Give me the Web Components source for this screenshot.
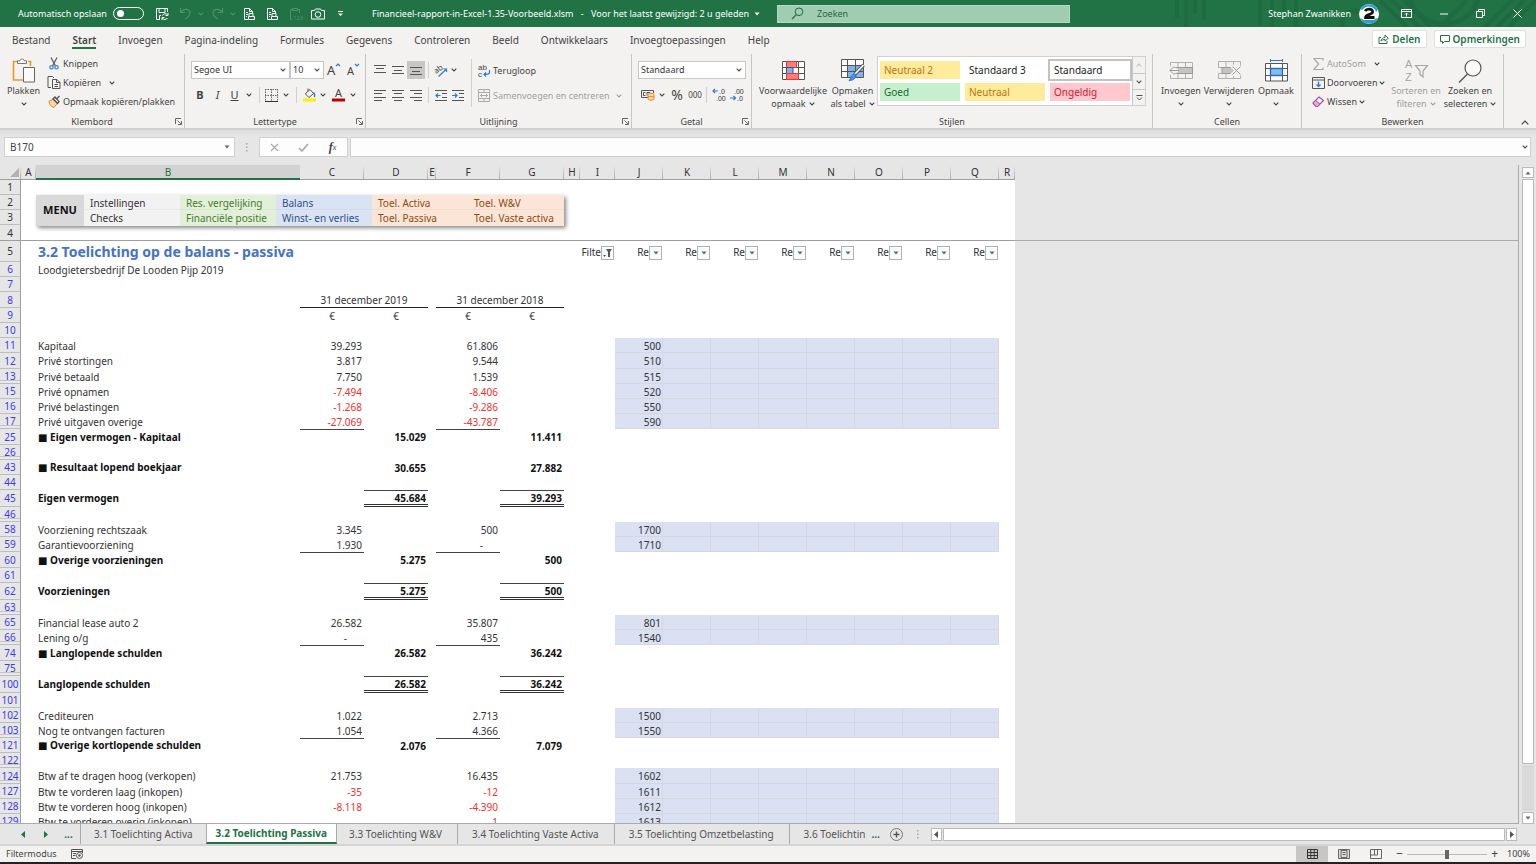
<!DOCTYPE html>
<html lang="nl">
<head>
<meta charset="utf-8">
<title>Financieel-rapport-in-Excel-1.35-Voorbeeld.xlsm</title>
<style>
html,body{margin:0;height:100%}
body{font:10px/14px "Noto Sans","Open Sans",sans-serif;color:#444;background:#e6e6e6;overflow:hidden}
</style>
</head>
<body>
<xl-app></xl-app>
<script>
const BASE=`*{box-sizing:border-box}button,input,select{font:inherit;color:inherit;margin:0;padding:0;border:0;background:none;border-radius:0;outline:0}button{cursor:default}a{color:inherit;text-decoration:none}`;
function define(tag,html){
  customElements.define(tag,class extends HTMLElement{
    connectedCallback(){
      if(this.shadowRoot)return;
      const root=this.attachShadow({mode:'open'});
      root.innerHTML=typeof html==='function'?html(this):html;
      const s=document.createElement('style');s.textContent=BASE;root.prepend(s);
    }
  });
}

/* ---------- icons: [width, height, markup] ---------- */
const lines=(a)=>a.map(([x,y,w])=>`<path d="M${x} ${y}.5h${w}" stroke="#555"/>`).join('');
const ICONS={
chev:[6,4,'<path d="M.7.7L3 3 5.3.7" stroke="currentColor" stroke-width="1.1"/>'],
save:[14,14,'<path d="M12.500 5V3.500V1.500H1.500V12.500H5M4 1.500V5.500H10V1.500M4.500 12.500V8.500H6" stroke="#fff"/><path d="M12.600 8A3 3 0 0 0 7.500 8.500M13 6v2.500h-2.500M7.300 11A3 3 0 0 0 12.500 11M7 13v-2.500H9.500" stroke="#fff"/>'],
undo:[13,13,'<path d="M1.500 1V5.500H6M1.800 5.300C4 2 8 1.500 10 3.500S11 9 6.500 12" stroke="#4f9068" stroke-width="1.200"/>'],
redo:[13,13,'<path d="M11.500 1V5.500H7M11.200 5.300C9 2 5 1.500 3 3.500S2 9 6.500 12" stroke="#4f9068" stroke-width="1.200"/>'],
sheetprint:[12,14,'<path d="M5 12.500H1.500V1.500H6.500L9.500 4.500V6M6.500 1.500V4.500H9.500M3 5.500H5M3 7.500H5M3 9.500H4" stroke="#fff"/><path d="M6 9V6.500H10V9M5.500 9.500h6v3h-6zM7 12.500h3" stroke="#fff"/>'],
paste123:[13,14,'<path d="M3 2.500H1.500V12.500H3M9 2.500H10.500V6M3.500 1.500H8.500V3.500H3.500z" stroke="#4f9068"/><text x="4" y="13" font-size="6" fill="#4f9068">123</text>'],
camera:[14,12,'<path d="M.500 2.500H3.500L4.500 1H9.500L10.500 2.500H13.500V11H.500z" stroke="#fff"/><circle cx="7" cy="6.500" r="2.800" stroke="#fff"/>'],
more:[7,6,'<path d="M1 .500H6" stroke="#fff"/><path d="M1 2.500H6L3.500 5z" fill="#fff"/>'],
tri:[6,4,'<path d="M.500 .500H5.500L3 3.500z" fill="currentColor"/>'],
mag:[13,13,'<circle cx="8" cy="4.800" r="3.800" stroke="#1e6b41"/><path d="M5.200 7.700L1 12" stroke="#1e6b41" stroke-width="1.200"/>'],
avatar:[20,20,'<circle cx="10" cy="10" r="10" fill="#fff"/><path d="M1.200 6A9.600 9.600 0 0 1 18.800 6L17 8C16 2.500 7 2 5.500 5zM1.200 14A9.600 9.600 0 0 0 18.800 14L14 15.500 3 15z" fill="#2a9fd8"/><path d="M6 7C8 4 14.500 4.500 13.500 8.500 12.500 11 6.500 10.500 6.500 13.500H15.500" stroke="#fff" stroke-width="5"/><path d="M6 7C8 4 14.500 4.500 13.500 8.500 12.500 11 6.500 10.500 6.500 13.500H15.500" stroke="#111" stroke-width="2.800"/>'],
winopts:[11,9,'<path d="M.500 .500H10.500V8.500H.500zM.500 2.500H10.500M5.500 7.500V4M4 5.500L5.500 4 7 5.500" stroke="#fff"/>'],
min:[8,2,'<path d="M0 1H8" stroke="#fff"/>'],
max:[9,9,'<path d="M.500 2.500H6.500V8.500H.500zM2.500 2V.500H8.500V6.500H7" stroke="#fff"/>'],
close:[9,9,'<path d="M.500 .500L8.500 8.500M8.500 .500L.500 8.500" stroke="#fff"/>'],
share:[11,10,'<path d="M3 3.500H1V9.500H9V7" stroke="#217346"/><path d="M3 7C3.500 4.500 5 3.500 7 3.500V1L10.300 4.300 7 7V5.500C5 5.500 4 6 3 7z" stroke="#217346"/>'],
comment:[10,9,'<path d="M.500 .500H9.500V6.500H4.500L2.500 8.500V6.500H.500z" stroke="#217346"/>'],
paste:[24,25,'<path d="M6 3.500H1.500V22H11M16 3.500H18.500V8" stroke="#e59a2e" stroke-width="1.600"/><path d="M5.500 5.500V2.800H8C8 .300 12 .300 12 2.800H14.500V5.500z" fill="#fff" stroke="#777"/><path d="M11.500 9.500H22.500V24H11.500z" fill="#fafafa" stroke="#666"/>'],
cut:[10,13,'<path d="M2 .500L6.500 9M8 .500L3.500 9" stroke="#555" stroke-width="1.200"/><circle cx="2.500" cy="10.300" r="1.700" stroke="#3b82d6" stroke-width="1.200"/><circle cx="7.500" cy="10.300" r="1.700" stroke="#3b82d6" stroke-width="1.200"/>'],
copy:[14,13,'<path d="M4 11.500H1V.500H5.500L7 2M5.500 3.500H10L13 6.500V12.500H5.500zM9.500 3.500V6.500H13M7.500 8.500H11M7.500 10.500H11" stroke="#555"/>'],
brush:[13,13,'<path d="M1 6L6 4 9.500 8 6 12.500C3 12 1 9 1 6z" fill="#f7d9a8" stroke="#e08a1e"/><path d="M5 4L7 2 11 6.500 9.500 8.500zM9 3.500L11.500 1" stroke="#555" stroke-width="1.400"/>'],
launch:[7,7,'<path d="M.500 6V.500H6M2.500 2.500L6 6M6.500 3V6.500H3" stroke="#666"/>'],
Aup:[14,14,'<text x="0" y="11.500" font-size="13" fill="#444">A</text><path d="M9 3L11 1 13 3" stroke="#2b7cd3" stroke-width="1.200"/>'],
Adn:[14,14,'<text x="1" y="11.500" font-size="11" fill="#444">A</text><path d="M9 1L11 3 13 1" stroke="#2b7cd3" stroke-width="1.200"/>'],
borders:[13,13,'<path d="M.500 0V12M12.500 0V12M6.500 0V12M0 .500H13M0 6.500H13" stroke="#666" stroke-dasharray="1.500 1"/><path d="M0 12.500H13" stroke="#333"/>'],
bucket:[13,14,'<path d="M3 5L7 1.500 10.500 5.500 6 9.500 2.500 6zM5 3.500L5 .500" stroke="#555"/><path d="M10.500 4.500C12 6 12 7.500 11.500 9" stroke="#2b6fc0" stroke-width="1.500"/><path d="M0 10.500H13V13.500H0z" fill="#ffee00"/>'],
fontcolor:[13,14,'<text x="3" y="9" font-size="11" fill="#444">A</text><path d="M0 10.500H13V13.500H0z" fill="#c00000"/>'],
top:[12,11,lines([[0,0,12],[2,3,8],[0,7,12]])],
mid:[12,11,lines([[0,1,12],[2,5,8],[0,8,12]])],
bot:[12,11,lines([[0,2,12],[2,6,8],[0,9,12]])],
left:[12,11,lines([[0,0,12],[0,3,8],[0,7,12],[0,10,8]])],
center:[12,11,lines([[0,0,12],[2,3,8],[0,7,12],[2,10,8]])],
right:[12,11,lines([[0,0,12],[4,3,8],[0,7,12],[4,10,8]])],
orient:[14,13,'<text x="1" y="9" font-size="8" fill="#444" transform="rotate(-35 3 8)">ab</text><path d="M4.500 12.500L12.500 5M9.500 5H12.500V8" stroke="#2b7cd3" stroke-width="1.200"/>'],
outdent:[13,11,'<path d="M0 .500H12M7 3.500H12M7 7.500H12M0 10.500H12" stroke="#555"/><path d="M5.500 5.500H1M3 3.500L1 5.500 3 7.500" stroke="#2b7cd3" stroke-width="1.200"/>'],
indent:[13,11,'<path d="M0 .500H12M7 3.500H12M7 7.500H12M0 10.500H12" stroke="#555"/><path d="M0 5.500H4.500M3 3.500L5 5.500 3 7.500" stroke="#2b7cd3" stroke-width="1.200"/>'],
wrap:[13,14,'<g font-family="Liberation Sans,sans-serif" font-size="8" fill="#444"><text x="0" y="6">ab</text><text x="0" y="13">c</text></g><path d="M11.500 6V8.500C11.500 10 10 10.500 6 10.500M8 8.500L6 10.500 8 12.500" stroke="#2b7cd3" stroke-width="1.200"/>'],
merge:[12,13,'<path d="M.500 .500H11.500V12.500H.500zM.500 3.500H11.500M.500 9.500H11.500M6 .500V3.500M6 9.500V12.500M2 6.500H10M4 5L2.500 6.500 4 8M8 5L9.500 6.500 8 8" stroke="#aaa"/>'],
money:[14,12,'<path d="M7 8.500H.500V1.500H12.500V4" stroke="#555"/><path d="M4.500 3.500H2.500V6.500H4.500M6 6.500V3.500H9" stroke="#555"/><path d="M7 5.500C7 4 13 4 13 5.500V10C13 11.500 7 11.500 7 10z" fill="#fbd9a2" stroke="#e08a1e"/><path d="M7 7.700H13" stroke="#e08a1e"/>'],
decplus:[14,14,'<g font-family="Liberation Sans,sans-serif" font-size="7" fill="#333"><text x="7" y="6">.0</text><text x="4" y="13">.00</text></g><path d="M6 3H1M3 1L1 3 3 5" stroke="#2b7cd3" stroke-width="1.200"/>'],
decmin:[14,14,'<g font-family="Liberation Sans,sans-serif" font-size="7" fill="#333"><text x="4" y="6">.00</text><text x="7" y="13">.0</text></g><path d="M0 10H5.500M3.500 8L5.500 10 3.500 12" stroke="#2b7cd3" stroke-width="1.200"/>'],
condfmt:[23,19,'<path d="M.500 .500H22.500V18.500H.500z" fill="#fff" stroke="#555"/><path d="M4.500 0V19M16.500 0V19M.500 6.500H22.500M.500 12.500H22.500" stroke="#555"/><path d="M4.500 .500H14.500V6.500H4.500z" fill="#ff7b7b" stroke="#e33"/><path d="M4.500 6.500H11V12.500H4.500z" fill="#7db4ec" stroke="#357"/><path d="M4.500 12.500H16.500V18.500H4.500z" fill="#ff7b7b" stroke="#e33"/>'],
fmttable:[24,23,'<path d="M.500 .500H22.500V18.500H.500z" fill="#fff" stroke="#555"/><path d="M6 6H22V18H6z" fill="#7db4ec"/><path d="M.500 6.500H22.500M.500 12.500H22.500M6.500 .500V18.500M14.500 .500V18.500" stroke="#555"/><path d="M22.500 6L13.500 15.500" stroke="#555" stroke-width="3.500"/><path d="M22.500 6L13.500 15.500" stroke="#fff" stroke-width="1.600"/><path d="M14.500 15C16 18 13 21.500 8 21.500 10 20 9.500 15 14.500 15z" fill="#4b93de" stroke="#2b6fc0"/>'],
insert:[25,19,'<path d="M1.500 1.500H23.500V17.500H1.500zM1.500 6.500H23.500M1.500 12.500H23.500M9 1.500V17.500M16.500 1.500V17.500" stroke="#b0b0b0"/><path d="M8 6.500H23.500V12.500H8z" fill="#c4c4c4" stroke="#999"/><path d="M9 9.500H0M4 5.500L0 9.500 4 13.500" stroke="#f3f2f1" stroke-width="4"/><path d="M10 9.500H1M5 5.500L1 9.500 5 13.500" stroke="#999"/>'],
delete:[25,19,'<path d="M1.500 .500H23.500V6.500H1.500zM1.500 12.500H23.500V17.500H1.500zM9 .500V6.500M16.500 .500V6.500M9 12.500V17.500M16.500 12.500V17.500" stroke="#b0b0b0"/><path d="M5 6.500H16V12.500H5z" fill="#c4c4c4" stroke="#999"/><path d="M15 5L24 14M24 5L15 14" stroke="#f3f2f1" stroke-width="4"/><path d="M15.500 5.500L23.500 13.500M23.500 5.500L15.500 13.500" stroke="#999"/>'],
format:[23,23,'<path d="M5.500 1.500H17.500M5.500 0V3M17.500 0V3" stroke="#2b7cd3"/><path d="M.500 4.500H22.500V22H.500z" fill="#fff" stroke="#555"/><path d="M.500 9.500H22.500M.500 16.500H22.500M5.500 4.500V22M17.500 4.500V22" stroke="#555"/><path d="M5.500 9.500H17.500V16.500H5.500z" fill="#83beec" stroke="#2b6fc0" stroke-width="1.400"/>'],
sum:[11,12,'<path d="M10 2.500V.500H1L5.500 6 1 11.500H10V9.500" stroke="#a8a8a8" stroke-width="1.200"/>'],
fill:[13,12,'<path d="M.500 .500H12.500V11.500H.500zM.500 3H12.500" stroke="#555"/><path d="M6.500 4.500V9.500M4.500 7.500L6.500 9.500 8.500 7.500" stroke="#2b7cd3" stroke-width="1.300"/>'],
erase:[13,12,'<path d="M1 7L7 1 11.500 4.500 5.500 10.500H4z" fill="#fff" stroke="#b146a5" stroke-width="1.200"/><path d="M1 7L3.500 4.500 8 8 5.500 10.500H4z" fill="#e3a8dc" stroke="#b146a5"/>'],
sort:[23,24,'<g font-family="Liberation Sans,sans-serif" font-size="11" fill="#a6a6a6"><text x="0" y="9">A</text><text x="0" y="22">Z</text></g><path d="M10.500 6.500H22.500L18 12V18L15 15.500V12z" stroke="#a6a6a6" stroke-width="1.200"/>'],
find:[24,24,'<circle cx="15" cy="9" r="8" fill="#fafafa" stroke="#555" stroke-width="1.200"/><path d="M9.500 15L1 23.500" stroke="#555" stroke-width="1.400"/>'],
funnel:[9,8,'<path d="M3 0H9L7 3V8H5V3z" fill="#555"/><path d="M0 6H3L1.500 8z" fill="#555"/>'],
cross:[9,9,'<path d="M1 1L8 8M8 1L1 8" stroke="#a9a9a9" stroke-width="1.200"/>'],
check:[11,9,'<path d="M1 5L4 8 10 1" stroke="#a9a9a9" stroke-width="1.600"/>'],
dots:[2,9,'<path d="M0 0H1.500V1.500H0zM0 3.500H1.500V5H0zM0 7H1.500V8.500H0z" fill="#a8a8a8"/>'],
corner:[9,9,'<path d="M9 0V9H0z" fill="#b2b2b2"/>'],
tleft:[4,7,'<path d="M4 0V7L0 3.500z" fill="currentColor"/>'],
tright:[4,7,'<path d="M0 0V7L4 3.500z" fill="currentColor"/>'],
tup:[6,4,'<path d="M.500 3.500H5.500L3 .500z" fill="currentColor"/>'],
plus:[13,13,'<circle cx="6.500" cy="6.500" r="6" stroke="#777"/><path d="M6.500 3.500V9.500M3.500 6.500H9.500" stroke="#555" stroke-width="1.400"/>'],
macro:[12,10,'<path d="M11.500 4V.500H.500V9.500H5M.500 2.500H11.500M2 4.500H5M2 6.500H4.500" stroke="#555"/><circle cx="8.500" cy="6.500" r="3" stroke="#555"/><circle cx="8.500" cy="6.500" r="1.200" fill="#555"/>'],
vnormal:[11,10,'<path d="M.500 .500H10.500V9.500H.500zM.500 3.500H10.500M.500 6.500H10.500M3.800 .500V9.500M7.200 .500V9.500" stroke="#333"/>'],
vpage:[12,10,'<path d="M.500 .500H11.500V9.500H.500z" fill="#ddd" stroke="#666"/><path d="M3 1.500H9V8.500H3zM4.500 3.500H7.500M4.500 5.500H7.500" stroke="#666"/>'],
vbreak:[12,10,'<path d="M.500 .500H11.500V9.500H.500zM4.500 .500V6M7.500 .500V6M.500 6H7.500" stroke="#666"/>'],
collapse:[8,5,'<path d="M.700 4.300L4 1 7.300 4.300" stroke="#444" stroke-width="1.200"/>'],
gmore:[7,6,'<path d="M.500 .500H6.500" stroke="#555"/><path d="M1 2.500L3.500 5 6 2.500" stroke="#555"/>']
};
const svg=(n)=>{const[w,h,m]=ICONS[n];return `<svg width="${w}" height="${h}" viewBox="0 0 ${w} ${h}" fill="none" aria-hidden="true">${m}</svg>`};
define('xl-icon',e=>`<style>:host{display:inline-flex;align-items:center;justify-content:center;flex:none}svg{display:block;overflow:visible}</style>${svg(e.getAttribute('name'))}`);

/* small ribbon tool: icon or letter in a fixed-width cell */
define('xl-tool',e=>`<style>:host{display:block;flex:none;width:${e.getAttribute('w')||18}px;height:18px}
button{width:100%;height:100%;display:flex;align-items:center;justify-content:center;font-size:11px}
:host([active]) button{background:#c8c6c4}</style>
<button aria-label="${e.getAttribute('label')||e.getAttribute('icon')}">${e.hasAttribute('icon')?`<xl-icon name="${e.getAttribute('icon')}"></xl-icon>`:'<slot></slot>'}</button>`);
define('xl-sep',e=>`<style>:host{display:flex;flex:none;justify-content:center;width:${e.getAttribute('w')||7}px;height:16px}:host([tall]){height:48px}i{width:1px;background:#d2d0ce}</style><i></i>`);
/* text row: icon + label + optional chevron */
define('xl-row',e=>`<style>:host{display:block}button{display:flex;align-items:center;height:19px;white-space:nowrap}
.i{width:14px;margin-right:2px}:host([off]) .t,:host([offcaret]) .c{color:#a19f9d}.c{margin-left:${e.getAttribute('caret')||0}px}</style>
<button><xl-icon class="i" name="${e.getAttribute('icon')}"></xl-icon><span class="t"><slot></slot></span>${e.hasAttribute('caret')?'<xl-icon class="c" name="chev"></xl-icon>':''}</button>`);
/* large button: icon above one or two lines of text */
define('xl-big',e=>{const l2=e.getAttribute('line2')||'';return `<style>:host{display:block;flex:none;width:${e.getAttribute('w')}px}
button{width:100%;display:flex;flex-direction:column;align-items:center;line-height:13px;white-space:nowrap}
.i{height:27px}span{display:flex;align-items:center;justify-content:center;gap:3px;height:13px}:host([off]) span{color:#a19f9d}</style>
<button><xl-icon class="i" name="${e.getAttribute('icon')}"></xl-icon><span><slot></slot></span><span>${l2}<xl-icon name="chev"></xl-icon></span></button>`});
define('xl-group',e=>`<style>:host{display:grid;grid-template-rows:1fr 13px;flex:none;height:74px;border-right:1px solid #c8c6c4}
.b{display:flex;align-items:flex-start}.f{display:grid;grid-template-columns:1fr auto 1fr;line-height:13px;align-items:center}
.l{grid-column:2}.k{grid-column:3;justify-self:end;margin-right:2px;display:flex}</style>
<div class="b"><slot></slot></div><div class="f"><span class="l">${e.getAttribute('name')}</span>${e.hasAttribute('launcher')?`<button class="k" aria-label="Instellingen ${e.getAttribute('name')}"><xl-icon name="launch"></xl-icon></button>`:''}</div>`);
define('xl-select',e=>`<style>:host{display:grid;flex:none;width:${e.getAttribute('w')}px;height:18px;background:#fff;border:1px solid #c8c6c4}
select,.c{grid-area:1/1}select{appearance:none;width:100%;padding:0 2px;color:#333}.c{justify-self:end;margin-right:3px;pointer-events:none}</style>
<select aria-label="${e.getAttribute('label')}"><option>${e.getAttribute('value')}</option></select><xl-icon class="c" name="chev"></xl-icon>`);

define('xl-titlebar',`<style>
:host{display:flex;align-items:center;height:27px;background:#217346;color:#fff;font-size:9px;position:relative;overflow:hidden}
.deco{position:absolute;right:0;top:0;height:27px;width:396px}
.q{display:flex;align-items:center;width:372px;flex:none;padding-left:18px}
label{display:flex;align-items:center;gap:6px;margin-right:7px}
input[type=checkbox]{appearance:none;width:31px;height:13px;border:1px solid #fff;border-radius:7px;display:flex;align-items:center;padding-left:3px}
input[type=checkbox]::before{content:"";width:7px;height:7px;border-radius:50%;background:#fff}
.q button{width:23px;height:20px;display:flex;align-items:center;justify-content:center}
.q button.n{width:9px;color:#4f9068}.q button.m{width:21px}
.t{display:flex;align-items:center;gap:5px;width:405px;flex:none;white-space:nowrap}
.s{display:flex;align-items:center;flex:0 1 293px;height:18px;background:#a0cdb2;border:1px solid #b4d8c2;color:#1e6b41}
.s xl-icon{width:39px}.s input{flex:1;min-width:0}.s input::placeholder{color:#1e6b41;opacity:1}
.w{margin-left:auto;display:flex;align-items:center;position:relative}
.w button{display:flex;align-items:center;justify-content:center;width:37px;height:27px}
.u{margin-right:8px}.v{margin-right:9px}
</style>
<svg class="deco" viewBox="0 0 396 27" fill="none" stroke="#1f6b41" stroke-width="4" aria-hidden="true"><path d="M37 0V18M46 0V27M55 0V14M64 0V20M120 0V25M132 0V27M144 0V16M156 0V27"/><circle cx="215" cy="24" r="13" stroke-width="5"/><path d="M240 0L267 27M252 0L279 27M264 0L291 27M300 27L327 0M345 27L372 0M357 27L384 0M369 27L396 0"/><path d="M270 0A36 36 0 0 0 338 0" stroke-width="5"/></svg>
<div class="q"><label>Automatisch opslaan<input type="checkbox"></label>
<button aria-label="Opslaan"><xl-icon name="save"></xl-icon></button>
<button aria-label="Ongedaan maken"><xl-icon name="undo"></xl-icon></button><button class="n" aria-label="Meer"><xl-icon name="chev"></xl-icon></button>
<button aria-label="Opnieuw"><xl-icon name="redo"></xl-icon></button><button class="n" aria-label="Meer"><xl-icon name="chev"></xl-icon></button>
<button aria-label="Afdrukken"><xl-icon name="sheetprint"></xl-icon></button>
<button aria-label="Afdrukvoorbeeld"><xl-icon name="sheetprint"></xl-icon></button>
<button aria-label="Waarden plakken"><xl-icon name="paste123"></xl-icon></button>
<button aria-label="Camera"><xl-icon name="camera"></xl-icon></button>
<button class="m" aria-label="Werkbalk aanpassen"><xl-icon name="more"></xl-icon></button></div>
<div class="t"><span>Financieel-rapport-in-Excel-1.35-Voorbeeld.xlsm</span><span>&nbsp;-&nbsp;</span><span>Voor het laatst gewijzigd: 2 u geleden</span><xl-icon name="tri"></xl-icon></div>
<div class="s"><xl-icon name="mag"></xl-icon><input type="search" placeholder="Zoeken" aria-label="Zoeken"></div>
<div class="w"><span class="u">Stephan Zwanikken</span><xl-icon class="v" name="avatar"></xl-icon>
<button aria-label="Lintopties"><xl-icon name="winopts"></xl-icon></button><button aria-label="Minimaliseren"><xl-icon name="min"></xl-icon></button><button aria-label="Herstellen"><xl-icon name="max"></xl-icon></button><button aria-label="Sluiten"><xl-icon name="close"></xl-icon></button></div>`);

define('xl-tabs',`<style>
:host{display:flex;align-items:flex-start;justify-content:space-between;height:27px;background:#f3f2f1;padding:3px 10px 0 12px}
nav{display:flex;gap:22px}nav a{height:19px;line-height:20px;border-bottom:2px solid transparent}
nav a.on{font-weight:600;border-color:#217346}
div{display:flex;gap:7px}
button{display:flex;align-items:center;gap:3px;height:18px;padding:0 5px;background:#fff;border:1px solid #e1dfdd;border-radius:2px;color:#217346;font-weight:600}
</style>
<nav>${['Bestand','Start','Invoegen','Pagina-indeling','Formules','Gegevens','Controleren','Beeld','Ontwikkelaars','Invoegtoepassingen','Help'].map(t=>`<a href="#"${t==='Start'?' class="on"':''}>${t}</a>`).join('')}</nav>
<div><button><xl-icon name="share"></xl-icon>Delen</button><button><xl-icon name="comment"></xl-icon>Opmerkingen</button></div>`);

define('xl-ribbon',`<style>
:host{display:flex;height:76px;background:#f3f2f1;border-bottom:2px solid #d2d0ce;font-size:9px}
.g1{width:185px}.g2{width:181px}.g3{width:266px}.g4{width:120px}.g5{width:401px}.g6{width:149px}.g7{width:202px}
.big{margin-top:3px}.rows{display:flex;flex-direction:column;gap:7px;margin:7px 0 0 6px}.g3 .rows{margin-left:5px}
.r{display:flex;align-items:center;height:18px}
.g3 .tall{margin:5px 2px 0 1px}.g3 .txt{margin-top:7px;display:flex;flex-direction:column;gap:6px}
.g5 .first{margin-left:2px}.g6 .first{margin-left:5px}
.gal{display:grid;grid-template-columns:1fr 13px;width:269px;height:50px;margin:2px 0 0 4px;border:1px solid #d2d0ce;background:#fff}
.cells{display:grid;grid-template:18px 18px/repeat(3,80px);gap:4px 5px;padding:4px 2px}
.cells button{text-align:left;padding-left:4px;font-size:10px;line-height:16px}
.y{background:#ffeb9c;color:#b87514}.gr{background:#c6efce;color:#1b6b2c}.rd{background:#ffc7ce;color:#c9202f}.n{color:#222}
.sel{outline:2px solid #c4c2c0;color:#222}
.sc{display:grid;grid-template-rows:17px 16px 15px;border-left:1px solid #c8c6c4}.sc button{display:flex;align-items:center;justify-content:center;background:#f3f2f1;border-bottom:1px solid #c8c6c4;color:#555}.sc button:first-child xl-icon{transform:rotate(180deg);color:#c0c0c0}.sc button:last-child{border:0}
.g7 .ed{width:81px;margin-left:9px}.g7 .fnd{margin-left:4px}
.end{margin:auto 7px 3px auto;display:flex}
.pct{font-size:14px}.k{font-size:8px}
</style>
<xl-group class="g1" name="Klembord" launcher><xl-big class="big" icon="paste" w="47">Plakken</xl-big>
<div class="col"><xl-row icon="cut">Knippen</xl-row><xl-row icon="copy" caret="8">Kopiëren</xl-row><xl-row icon="brush">Opmaak kopiëren/plakken</xl-row></div></xl-group>
<xl-group class="g2" name="Lettertype" launcher><div class="rows">
<div class="r"><xl-select w="99" label="Lettertype" value="Segoe UI"></xl-select><xl-select w="34" label="Tekengrootte" value="10"></xl-select><xl-tool icon="Aup" w="20"></xl-tool><xl-tool icon="Adn" w="17"></xl-tool></div>
<div class="r"><xl-tool label="Vet"><b>B</b></xl-tool><xl-tool w="17" label="Cursief"><i>I</i></xl-tool><xl-tool w="17" label="Onderstrepen"><u>U</u></xl-tool><xl-tool w="12" icon="chev"></xl-tool><xl-sep w="8"></xl-sep><xl-tool w="16" icon="borders"></xl-tool><xl-tool w="14" icon="chev"></xl-tool><xl-sep></xl-sep><xl-tool icon="bucket"></xl-tool><xl-tool w="10" icon="chev"></xl-tool><xl-tool w="20" icon="fontcolor"></xl-tool><xl-tool w="10" icon="chev"></xl-tool></div></div></xl-group>
<xl-group class="g3" name="Uitlijning" launcher><div class="rows">
<div class="r"><xl-tool icon="top"></xl-tool><xl-tool icon="mid"></xl-tool><xl-tool icon="bot" active></xl-tool><xl-sep></xl-sep><xl-tool icon="orient"></xl-tool><xl-tool w="8" icon="chev"></xl-tool></div>
<div class="r"><xl-tool icon="left"></xl-tool><xl-tool icon="center"></xl-tool><xl-tool icon="right"></xl-tool><xl-sep></xl-sep><xl-tool icon="outdent"></xl-tool><xl-tool w="17" icon="indent"></xl-tool></div></div>
<xl-sep class="tall" tall></xl-sep>
<div class="txt"><xl-row icon="wrap">Terugloop</xl-row><xl-row icon="merge" off offcaret caret="6">Samenvoegen en centreren</xl-row></div></xl-group>
<xl-group class="g4" name="Getal" launcher><div class="rows"><div class="r"><xl-select w="108" label="Getalnotatie" value="Standaard"></xl-select></div>
<div class="r"><xl-tool w="20" icon="money"></xl-tool><xl-tool w="8" icon="chev"></xl-tool><xl-tool w="22" label="Procent"><span class="pct">%</span></xl-tool><xl-tool w="14" label="Duizendtallen"><span class="k">000</span></xl-tool><xl-sep w="8"></xl-sep><xl-tool icon="decplus"></xl-tool><xl-tool icon="decmin"></xl-tool></div></div></xl-group>
<xl-group class="g5" name="Stijlen"><xl-big class="big first" icon="condfmt" w="78" line2="opmaak">Voorwaardelijke</xl-big><xl-big class="big" icon="fmttable" w="41" line2="als tabel">Opmaken</xl-big>
<div class="gal"><div class="cells"><button class="y">Neutraal 2</button><button class="n">Standaard 3</button><button class="sel">Standaard</button><button class="gr">Goed</button><button class="y">Neutraal</button><button class="rd">Ongeldig</button></div>
<div class="sc"><button aria-label="Omhoog"><xl-icon name="chev"></xl-icon></button><button aria-label="Omlaag"><xl-icon name="chev"></xl-icon></button><button aria-label="Meer stijlen"><xl-icon name="gmore"></xl-icon></button></div></div></xl-group>
<xl-group class="g6" name="Cellen"><xl-big class="big first" icon="insert" w="46">Invoegen</xl-big><xl-big class="big" icon="delete" w="50">Verwijderen</xl-big><xl-big class="big" icon="format" w="44">Opmaak</xl-big></xl-group>
<xl-group class="g7" name="Bewerken"><div class="ed"><xl-row icon="sum" off caret="8">AutoSom</xl-row><xl-row icon="fill" caret="2">Doorvoeren</xl-row><xl-row icon="erase" caret="2">Wissen</xl-row></div>
<xl-big class="big" icon="sort" w="48" off line2="filteren">Sorteren en</xl-big><xl-big class="big fnd" icon="find" w="52" line2="selecteren">Zoeken en</xl-big></xl-group>
<button class="end" aria-label="Lint samenvouwen"><xl-icon name="collapse"></xl-icon></button>`);

define('xl-formula',`<style>
:host{display:flex;align-items:center;height:35px;padding:0 5px 1px 4px;background:linear-gradient(#dcdcdc,#e6e6e6 6px)}
.n{display:grid;width:231px}.n input,.n xl-icon{grid-area:1/1}.n input,.f input{width:100%;height:20px;background:#fdfdfd;border:1px solid #d0d0d0;padding:0 5px}
.n xl-icon{justify-self:end;align-self:center;margin-right:5px;color:#666}
.d{width:24px}.b{display:flex;align-items:center;width:89px;height:20px;background:#fdfdfd;border:1px solid #d0d0d0}
.b button{flex:1;height:18px;display:flex;align-items:center;justify-content:center;font:italic 12px "Liberation Serif",serif}
.b sub{font-size:8px}
.f{display:grid;flex:1;margin-left:2px}.f input,.f xl-icon{grid-area:1/1}.f xl-icon{justify-self:end;margin-right:3px}
</style>
<div class="n"><input value="B170" aria-label="Naamvak"><xl-icon name="tri"></xl-icon></div><xl-icon class="d" name="dots"></xl-icon>
<div class="b"><button aria-label="Annuleren"><xl-icon name="cross"></xl-icon></button><button aria-label="Invoeren"><xl-icon name="check"></xl-icon></button><button aria-label="Functie invoegen"><b>f</b><sub>x</sub></button></div>
<div class="f"><input aria-label="Formulebalk"><xl-icon name="chev"></xl-icon></div>`);

define('xl-menu',`<style>
:host{display:grid;grid-template-columns:48px repeat(5,96px);width:528px;height:31px;box-shadow:2px 2px 4px #888;font-weight:400}
b{display:flex;align-items:center;justify-content:center;background:#d9d9d9;color:#111;font-size:11px}
div{display:grid;grid-template-rows:15px 16px}a{padding-left:6px;line-height:16px;white-space:nowrap}a:first-child{box-shadow:inset 0 -1px #0000000a}
.a{background:#f2f2f2;color:#333}.g{background:#e2f0d9;color:#4b7a30}.u{background:#dae3f3;color:#2f5088}.o{background:#fbe5d6;color:#8f4a12}
</style><b>MENU</b>
<div class="a"><a href="#">Instellingen</a><a href="#">Checks</a></div><div class="g"><a href="#">Res. vergelijking</a><a href="#">Financiële positie</a></div>
<div class="u"><a href="#">Balans</a><a href="#">Winst- en verlies</a></div><div class="o"><a href="#">Toel. Activa</a><a href="#">Toel. Passiva</a></div><div class="o"><a href="#">Toel. W&amp;V</a><a href="#">Toel. Vaste activa</a></div>`);

/* ---------- worksheet data: row, height, cells by column, flags ---------- */
const COLS=[['A',15],['B',264],['C',64],['D',64],['E',8],['F',64],['G',64],['H',16],['I',35],['J',48],['K',48],['L',48],['M',48],['N',48],['O',48],['P',48],['Q',48],['R',16]];
const d=(l,c,f,j,x={})=>({c:{B:l,C:c,F:f,J:j},blue:1,...x});
const sub=(l,D,G,x={})=>({c:{B:l,D,G},bold:1,...x});
const ROWS=[[1,15,{}],[2,15,{menu:1}],[3,15,{}],[4,16,{freeze:1}],[5,21,{filter:1}],[6,15,{c:{B:'Loodgietersbedrijf De Looden Pijp 2019'}}],[7,15,{}],
[8,16,{dates:1}],[9,15,{c:{C:'€',D:'€',F:'€',G:'€'},ctr:1}],[10,15,{}],
[11,15,d('Kapitaal','39.293','61.806','500')],[12,16,d('Privé stortingen','3.817','9.544','510')],[13,15,d('Privé betaald','7.750','1.539','515',{gap:1})],
[15,15,d('Privé opnamen','-7.494','-8.406','520')],[16,15,d('Privé belastingen','-1.268','-9.286','550')],[17,15,d('Privé uitgaven overige','-27.069','-43.787','590',{gap:1})],
[25,16,sub('■ Eigen vermogen - Kapitaal','15.029','11.411',{over:1})],[26,15,{gap:1}],[43,15,sub('■ Resultaat lopend boekjaar','30.655','27.882')],[44,15,{}],
[45,17,sub('Eigen vermogen','45.684','39.293',{total:1})],[46,15,{gap:1}],
[58,15,d('Voorziening rechtszaak','3.345','500','1700')],[59,15,d('Garantievoorziening','1.930','-','1710')],
[60,16,sub('■ Overige voorzieningen','5.275','500',{over:1})],[61,15,{}],[62,17,sub('Voorzieningen','5.275','500',{total:1})],[63,15,{gap:1}],
[65,15,d('Financial lease auto 2','26.582','35.807','801')],[66,15,d('Lening o/g','-','435','1540',{gap:1})],
[74,16,sub('■ Langlopende schulden','26.582','36.242',{over:1})],[75,15,{gap:1}],[100,17,sub('Langlopende schulden','26.582','36.242',{total:1})],[101,15,{}],
[102,15,d('Crediteuren','1.022','2.713','1500')],[103,15,d('Nog te ontvangen facturen','1.054','4.366','1550',{gap:1})],
[121,15,sub('■ Overige kortlopende schulden','2.076','7.079',{over:1})],[122,15,{gap:1}],
[124,16,d('Btw af te dragen hoog (verkopen)','21.753','16.435','1602',{gap:1})],[127,15,d('Btw te vorderen laag (inkopen)','-35','-12','1611')],
[128,15,d('Btw te vorderen hoog (inkopen)','-8.118','-4.390','1612')],[129,15,d('Btw te vorderen overig (inkopen)','-','-1','1613')]];
function cell(col,r){
  const cls=[];let t=(r.c&&r.c[col])||'';
  if(r.menu&&col==='B')return '<td><xl-menu></xl-menu></td>';
  if(r.filter){
    if(col==='B')return '<td class="title">3.2 Toelichting op de balans - passiva</td>';
    if(col==='I')return '<td class="flt">Filte<button class="fb" aria-label="Filter"><xl-icon name="funnel"></xl-icon></button></td>';
    if(col>='J'&&col<='Q')return `<td class="flt">Re<button class="fb" aria-label="Filter ${col}"><xl-icon name="tri"></xl-icon></button></td>`;
  }
  if(col!=='B'&&t)cls.push(r.ctr?'ctr':'num');
  if(t==='-'){cls.push('dash')}else if(/^-\d/.test(t))cls.push('neg');
  if(r.blue&&col>='J'&&col<='Q')cls.push('blue');
  if(r.over&&(col==='C'||col==='F'))cls.push('over');
  if(r.total&&(col==='D'||col==='G'))cls.push('total');
  return `<td${cls.length?` class="${cls.join(' ')}"`:''}>${t}</td>`;
}
function row([n,h,r]){
  let cells;
  if(r.dates)cells='<td></td><td></td><td colspan="2" class="date">31 december 2019</td><td></td><td colspan="2" class="date">31 december 2018</td>'+COLS.slice(7).map(()=>'<td></td>').join('');
  else cells=COLS.map(c=>cell(c[0],r)).join('');
  return `<tr class="h${h}${r.bold?' bold':''}${r.freeze?' freeze':''}${n<6?' black':''}${r.gap?' gap':''}"><th scope="row">${n}</th>${cells}</tr>`;
}
define('xl-sheet',`<style>
:host{display:block;flex:1;min-width:0;overflow:hidden;border-right:1px solid #ababab;border-bottom:1px solid #ababab;position:relative}
table{table-layout:fixed;width:1015px;border-collapse:separate;border-spacing:0;line-height:12px;color:#333}
th,td{padding:0;white-space:nowrap;vertical-align:middle}
thead th{height:15px;font-weight:400;color:#333;border-bottom:1px solid #9f9f9f;background:linear-gradient(#e6e6e6,#ababab) right/1px 100% no-repeat}
thead th.s{background:#d2d2d2;color:#217346;border-bottom:2px solid #217346}
thead xl-icon{display:flex;justify-content:flex-end;padding-right:2px}
tbody{background:#fff}
tbody th{background:#e6e6e6;font-weight:400;color:#3a3af0;border-right:1px solid #9f9f9f;border-bottom:1px solid #bdbdbd}
tr.black th{color:#333}tr.gap th{box-shadow:inset 0 -2px #e9e9e9,inset 0 -3px #c4c4c4}
.h15{height:15px}.h16{height:16px}.h17{height:17px}.h21{height:21px}
.h17 td:not(.total){padding-bottom:2px}
td:nth-child(3){padding-left:2px;font-family:"Noto Sans","DejaVu Sans",sans-serif}td xl-menu{position:absolute;margin:-8px 0 0 -2px}
.sq{font-family:"DejaVu Sans",sans-serif;font-weight:400}
.title{font-size:14px;font-weight:700;line-height:19px;color:#4472c4}
.bold td{font-weight:700;color:#111}
.num{text-align:right;padding-right:2px}.ctr,.date{text-align:center}.neg{color:#f3312b}.dash{padding-right:17px}
.date{border-bottom:1px solid #222}.over{border-top:1px solid #444}.total{border-top:1px solid #444;border-bottom:3px double #333}
.blue{background:#d9e1f2;border-right:1px solid #d6d8de;border-bottom:1px solid #d6d8de;padding:1px 1px 0 0}
.freeze td,.freeze th{border-bottom:1px solid #9f9f9f}
.line{position:absolute;left:1015px;right:0;top:75px;height:1px;background:#ababab}
.flt{text-align:right;padding:1px 14px 0 0;position:relative}
.fb{position:absolute;right:1px;top:5px;width:13px;height:14px;border:1px solid #b0b0bc;background:#fafbfd;display:flex;align-items:center;justify-content:center;color:#666}
</style>
<table><colgroup><col style="width:21px">${COLS.map(c=>`<col style="width:${c[1]}px">`).join('')}</colgroup>
<thead><tr><th><xl-icon name="corner"></xl-icon></th>${COLS.map(c=>`<th scope="col"${c[0]==='B'?' class="s"':''}>${c[0]}</th>`).join('')}</tr></thead>
<tbody>${ROWS.map(row).join('').replace(/■/g,'<span class="sq">■</span>')}</tbody></table><div class="line"></div>`);

define('xl-vscroll',`<style>
:host{display:grid;grid-template-rows:11px 1fr 46px 12px;width:12px;margin:2px 2px 0 3px;row-gap:1px}
button,div{background:#fff;border:1px solid #bababa;color:#666;display:flex;align-items:center;justify-content:center}.t{background:#d9d9d9}
</style><button aria-label="Omhoog"><xl-icon name="tup"></xl-icon></button><div></div><span class="t"></span><button aria-label="Omlaag"><xl-icon name="tri"></xl-icon></button>`);

define('xl-sheettabs',`<style>
:host{display:flex;align-items:center;height:22px;border-bottom:2px solid #d4d4d4;color:#555}
.n{display:flex;color:#217346;padding-left:11px}.n button{width:23px;height:16px;display:flex;align-items:center;justify-content:center}
nav{display:flex;height:100%}a{display:flex;align-items:center;padding:0 15px 0 14px;height:20px;white-space:nowrap}
a+a{border-left:1px solid #ababab}
.first{border-left:1px solid #ababab;padding:0 13px}
a.on{background:#fff;border:1px solid #ababab;border-top:0;border-bottom:2px solid #217346;color:#217346;font-weight:700;padding:0 9px;margin-top:-1px;height:21px}
.on+a{border-left:0;padding-left:12px}.last{padding-right:6px}
.e{color:#217346;font-weight:700}.p{margin:0 14px 0 10px;display:flex}
.h{display:grid;grid-template-columns:11px 1fr 11px;gap:1px;height:13px;flex:1;margin:0 19px 0 12px}
.h button,.h div{background:#fff;border:1px solid #bababa;display:flex;align-items:center;justify-content:center;color:#555}
</style>
<div class="n"><button aria-label="Vorige"><xl-icon name="tleft"></xl-icon></button><button aria-label="Volgende"><xl-icon name="tright"></xl-icon></button><button class="e">...</button></div>
<nav><a href="#" class="first">3.1 Toelichting Activa</a><a href="#" class="on">3.2 Toelichting Passiva</a><a href="#">3.3 Toelichting W&amp;V</a><a href="#">3.4 Toelichting Vaste Activa</a><a href="#">3.5 Toelichting Omzetbelasting</a><a href="#" class="last">3.6 Toelichtin</a></nav>
<span class="e">...</span><button class="p" aria-label="Nieuw blad"><xl-icon name="plus"></xl-icon></button><xl-icon name="dots"></xl-icon>
<div class="h"><button aria-label="Links"><xl-icon name="tleft"></xl-icon></button><div></div><button aria-label="Rechts"><xl-icon name="tright"></xl-icon></button></div>`);

define('xl-status',`<style>
:host{display:flex;align-items:center;height:18px;background:#f3f2f1;border-bottom:2px solid #222;font-size:9px;padding:0 6px}
.m{margin-left:14px;display:flex}.v{margin-left:auto;display:flex}.v button{width:32px;height:16px;display:flex;align-items:center;justify-content:center}.v .on{background:#c8c6c4}
.z{display:flex;align-items:center}.z button{width:15px;text-align:center;font-size:12px;line-height:14px}
input{appearance:none;width:80px;height:14px;background:linear-gradient(#bbb,#bbb) center/100% 1px no-repeat}
input::-webkit-slider-thumb{appearance:none;width:4px;height:9px;background:#666}
output{margin-left:5px}
</style><span>Filtermodus</span><button class="m" aria-label="Macro opnemen"><xl-icon name="macro"></xl-icon></button>
<div class="v"><button class="on" aria-label="Normaal"><xl-icon name="vnormal"></xl-icon></button><button aria-label="Pagina-indeling"><xl-icon name="vpage"></xl-icon></button><button aria-label="Pagina-eindevoorbeeld"><xl-icon name="vbreak"></xl-icon></button></div>
<div class="z"><button aria-label="Uitzoomen">−</button><input type="range" aria-label="Zoom" min="0" max="200" value="100"><button aria-label="Inzoomen">+</button><output>100%</output></div>`);

define('xl-app',`<style>
:host{display:flex;flex-direction:column;height:100vh;min-width:1280px}
.body{flex:1;min-height:0;display:flex}
</style><xl-titlebar></xl-titlebar><xl-tabs></xl-tabs><xl-ribbon></xl-ribbon><xl-formula></xl-formula>
<div class="body"><xl-sheet></xl-sheet><xl-vscroll></xl-vscroll></div><xl-sheettabs></xl-sheettabs><xl-status></xl-status>`);
</script>
</body>
</html>
